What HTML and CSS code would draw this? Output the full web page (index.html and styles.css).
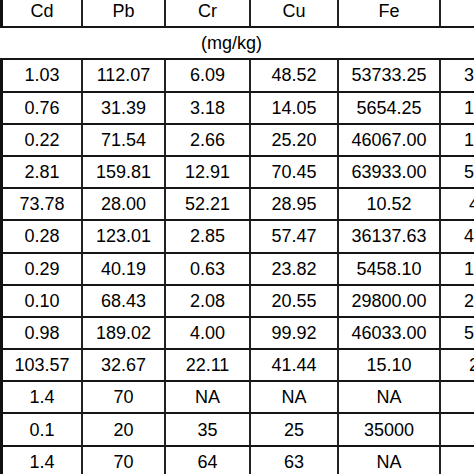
FILE: index.html
```html
<!DOCTYPE html>
<html>
<head>
<meta charset="utf-8">
<link rel="stylesheet" href="styles.css">
</head>
<body>
<table class="data">
  <colgroup>
    <col class="c1"><col class="c2"><col class="c3"><col class="c4"><col class="c5"><col class="c6">
  </colgroup>
  <tr class="head">
    <td class="first">Cd</td><td>Pb</td><td>Cr</td><td>Cu</td><td>Fe</td><td>Zn</td>
  </tr>
  <tr class="unit">
    <td colspan="6">(mg/kg)</td>
  </tr>
  <tr><td class="first">1.03</td><td>112.07</td><td>6.09</td><td>48.52</td><td>53733.25</td><td>312.45</td></tr>
  <tr><td class="first">0.76</td><td>31.39</td><td>3.18</td><td>14.05</td><td>5654.25</td><td>145.20</td></tr>
  <tr><td class="first">0.22</td><td>71.54</td><td>2.66</td><td>25.20</td><td>46067.00</td><td>168.00</td></tr>
  <tr><td class="first">2.81</td><td>159.81</td><td>12.91</td><td>70.45</td><td>63933.00</td><td>512.00</td></tr>
  <tr><td class="first">73.78</td><td>28.00</td><td>52.21</td><td>28.95</td><td>10.52</td><td>45.21</td></tr>
  <tr><td class="first">0.28</td><td>123.01</td><td>2.85</td><td>57.47</td><td>36137.63</td><td>412.36</td></tr>
  <tr><td class="first">0.29</td><td>40.19</td><td>0.63</td><td>23.82</td><td>5458.10</td><td>120.19</td></tr>
  <tr><td class="first">0.10</td><td>68.43</td><td>2.08</td><td>20.55</td><td>29800.00</td><td>215.00</td></tr>
  <tr><td class="first">0.98</td><td>189.02</td><td>4.00</td><td>99.92</td><td>46033.00</td><td>533.00</td></tr>
  <tr><td class="first">103.57</td><td>32.67</td><td>22.11</td><td>41.44</td><td>15.10</td><td>23.34</td></tr>
  <tr><td class="first">1.4</td><td>70</td><td>NA</td><td>NA</td><td>NA</td><td></td></tr>
  <tr><td class="first">0.1</td><td>20</td><td>35</td><td>25</td><td>35000</td><td></td></tr>
  <tr><td class="first">1.4</td><td>70</td><td>64</td><td>63</td><td>NA</td><td></td></tr>
</table>
</body>
</html>
```

FILE: styles.css
```css
html, body {
  margin: 0;
  padding: 0;
  background: #ffffff;
  overflow: hidden;
}

body {
  width: 474px;
  height: 474px;
  font-family: "Liberation Sans", Arial, sans-serif;
  color: #000000;
}

.data {
  border-collapse: separate;
  border-spacing: 0;
  table-layout: fixed;
  width: 544px;
  margin-top: -4px;
  font-size: 18px;
}

.c1 { width: 83px; }
.c2 { width: 83px; }
.c3 { width: 85px; }
.c4 { width: 88px; }
.c5 { width: 102px; }
.c6 { width: 103px; }

.data td {
  height: 32.2px;
  padding: 0;
  box-sizing: border-box;
  text-align: center;
  vertical-align: middle;
  white-space: nowrap;
  border-right: 2px solid #222222;
  border-bottom: 2px solid #151515;
  line-height: 20px;
}

.data td.first {
  border-left: 3px solid #111111;
}

.data tr.unit td {
  border-right: none;
  border-left: none;
  text-align: left;
  padding-left: 201px;
}
```
